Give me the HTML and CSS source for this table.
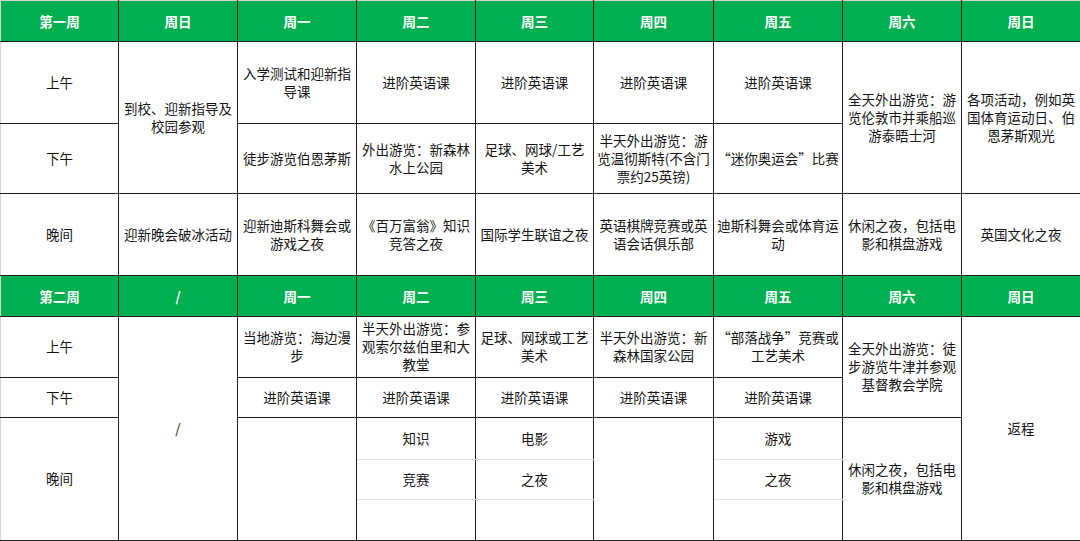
FILE: index.html
```html
<!DOCTYPE html>
<html lang="zh-CN">
<head>
<meta charset="utf-8">
<title>课程安排</title>
<link rel="stylesheet" href="styles.css">
</head>
<body>
<table class="schedule">
  <colgroup>
    <col class="c118"><col class="c119"><col class="c119"><col class="c119"><col class="c118"><col class="c120"><col class="c129"><col class="c119"><col class="c119">
  </colgroup>
  <tr class="hd">
    <th class="t">第一周</th><th class="t">周日</th><th class="t">周一</th><th class="t">周二</th><th class="t">周三</th><th class="t">周四</th><th class="t">周五</th><th class="t">周六</th><th class="t r">周日</th>
  </tr>
  <tr class="h82">
    <td>上午</td>
    <td rowspan="2">到校、迎新指导及<br>校园参观</td>
    <td>入学测试和迎新指<br>导课</td>
    <td>进阶英语课</td>
    <td>进阶英语课</td>
    <td>进阶英语课</td>
    <td>进阶英语课</td>
    <td rowspan="2">全天外出游览：游<br>览伦敦市并乘船巡<br>游泰晤士河</td>
    <td rowspan="2" class="r">各项活动，例如英<br>国体育运动日、伯<br>恩茅斯观光</td>
  </tr>
  <tr class="h70">
    <td>下午</td>
    <td>徒步游览伯恩茅斯</td>
    <td>外出游览：新森林<br>水上公园</td>
    <td>足球、网球/工艺<br>美术</td>
    <td>半天外出游览：游<br>览温彻斯特(不含门<br>票约25英镑)</td>
    <td>“迷你奥运会”比赛</td>
  </tr>
  <tr class="h82">
    <td>晚间</td>
    <td>迎新晚会破冰活动</td>
    <td>迎新迪斯科舞会或<br>游戏之夜</td>
    <td>《百万富翁》知识<br>竞答之夜</td>
    <td>国际学生联谊之夜</td>
    <td>英语棋牌竞赛或英<br>语会话俱乐部</td>
    <td>迪斯科舞会或体育运<br>动</td>
    <td>休闲之夜，包括电<br>影和棋盘游戏</td>
    <td class="r">英国文化之夜</td>
  </tr>
  <tr class="hd">
    <th>第二周</th><th>/</th><th>周一</th><th>周二</th><th>周三</th><th>周四</th><th>周五</th><th>周六</th><th class="r">周日</th>
  </tr>
  <tr class="h61">
    <td>上午</td>
    <td rowspan="6">/</td>
    <td>当地游览：海边漫<br>步</td>
    <td>半天外出游览：参<br>观索尔兹伯里和大<br>教堂</td>
    <td>足球、网球或工艺<br>美术</td>
    <td>半天外出游览：新<br>森林国家公园</td>
    <td>“部落战争”竞赛或<br>工艺美术</td>
    <td rowspan="2">全天外出游览：徒<br>步游览牛津并参观<br>基督教会学院</td>
    <td rowspan="6" class="r">返程</td>
  </tr>
  <tr class="h40">
    <td>下午</td>
    <td>进阶英语课</td>
    <td>进阶英语课</td>
    <td>进阶英语课</td>
    <td>进阶英语课</td>
    <td>进阶英语课</td>
  </tr>
  <tr class="h42">
    <td rowspan="4">晚间</td>
    <td rowspan="4"></td>
    <td class="sub">知识</td>
    <td class="sub">电影</td>
    <td rowspan="4"></td>
    <td class="sub">游戏</td>
    <td rowspan="4">休闲之夜，包括电<br>影和棋盘游戏</td>
  </tr>
  <tr class="h40">
    <td class="sub">竞赛</td>
    <td class="sub">之夜</td>
    <td class="sub">之夜</td>
  </tr>
  <tr class="h41">
    <td class="last"></td>
    <td class="last"></td>
    <td class="last"></td>
  </tr>
  <tr class="h0"></tr>
</table>
</body>
</html>
```

FILE: styles.css
```css
html, body {
  margin: 0;
  padding: 0;
  background: #ffffff;
}

body {
  width: 1080px;
  height: 541px;
  overflow: hidden;
}

.schedule {
  width: 1080px;
  table-layout: fixed;
  border-collapse: collapse;
  border-left: 1px solid #d6d6d6;
  border-top: 1px solid #d6d6d6;
  font-family: "Microsoft YaHei", "Noto Sans CJK SC", "Noto Sans", sans-serif;
  font-size: 13.5px;
  line-height: 18px;
  color: #151515;
}

.c118 { width: 118px; }
.c119 { width: 119px; }
.c120 { width: 120px; }
.c129 { width: 129px; }

.schedule th,
.schedule td {
  padding: 0 1px 2px;
  text-align: center;
  vertical-align: middle;
  border-right: 1px solid #1e1e1e;
  border-bottom: 1px solid #1e1e1e;
  overflow: hidden;
  white-space: nowrap;
}

.schedule th {
  padding: 0 1px;
  background: #00b050;
  color: #ffffff;
  font-weight: 700;
}

.schedule .r {
  border-right: 1px solid #d0d0d0;
}

.schedule td.sub {
  border-bottom: 1px solid #e2e2e2;
}

.hd { height: 41px; }
.h82 { height: 82px; }
.h70 { height: 70px; }
.h61 { height: 61px; }
.h42 { height: 42px; }
.h41 { height: 41px; }
.h40 { height: 40px; }
.h0 { height: 0; }
```
